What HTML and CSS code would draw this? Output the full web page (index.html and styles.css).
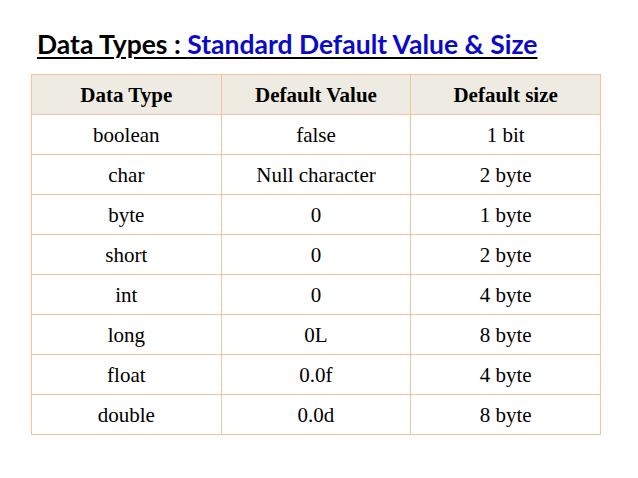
FILE: index.html
```html
<!DOCTYPE html>
<html>
<head>
<meta charset="utf-8">
<link rel="stylesheet" href="styles.css">
</head>
<body>
<div class="slide">
  <h1 class="title"><span class="black">Data Types : </span><span class="blue">Standard Default Value &amp; Size</span></h1>
  <table class="grid">
    <thead>
      <tr><th>Data Type</th><th>Default Value</th><th>Default size</th></tr>
    </thead>
    <tbody>
      <tr><td>boolean</td><td>false</td><td>1 bit</td></tr>
      <tr><td>char</td><td>Null character</td><td>2 byte</td></tr>
      <tr><td>byte</td><td>0</td><td>1 byte</td></tr>
      <tr><td>short</td><td>0</td><td>2 byte</td></tr>
      <tr><td>int</td><td>0</td><td>4 byte</td></tr>
      <tr><td>long</td><td>0L</td><td>8 byte</td></tr>
      <tr><td>float</td><td>0.0f</td><td>4 byte</td></tr>
      <tr><td>double</td><td>0.0d</td><td>8 byte</td></tr>
    </tbody>
  </table>
</div>
</body>
</html>
```
FILE: styles.css
```css
html, body {
  margin: 0;
  padding: 0;
  background: #ffffff;
}
.slide {
  width: 638px;
  height: 478px;
  padding: 27px 0 0 31px;
  box-sizing: border-box;
}
.title {
  margin: 0 0 0 6px;
  font-family: "Lato", "Liberation Sans", sans-serif;
  font-weight: 700;
  font-size: 26.5px;
  line-height: 34px;
  height: 47px;
  white-space: nowrap;
  text-decoration: underline;
  text-decoration-thickness: 2px;
  text-underline-offset: 3px;
}
.black { color: #000000; }
.blue { color: #0a0ac8; }
.grid {
  border-collapse: collapse;
  width: 570px;
  table-layout: fixed;
  font-family: "Liberation Serif", "Times New Roman", serif;
  font-size: 21px;
  color: #000000;
}
.grid th, .grid td {
  border: 1px solid #f4c39b;
  height: 37px;
  padding: 2px 0 0 0;
  text-align: center;
  vertical-align: middle;
}
.grid th {
  background: #eeece2;
  font-weight: 700;
  font-size: 21px;
}
```
